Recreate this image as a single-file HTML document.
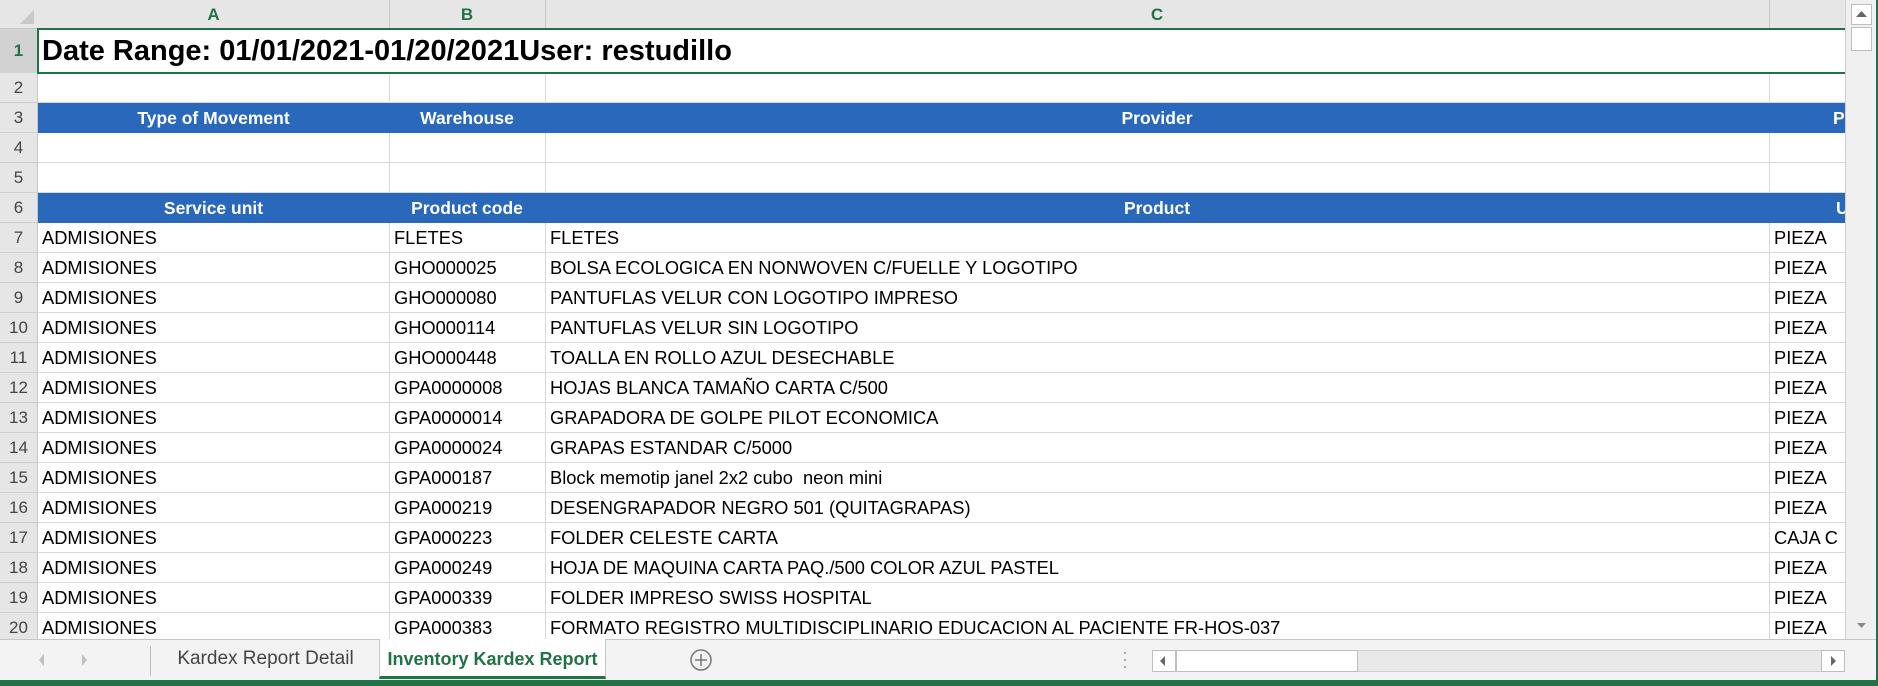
<!DOCTYPE html>
<html><head><meta charset="utf-8"><style>
*{margin:0;padding:0;box-sizing:border-box}
html,body{width:1878px;height:686px;overflow:hidden}
body{background:#fff;font-family:"Liberation Sans",sans-serif;position:relative}
.abs{position:absolute}
.hl{position:absolute;height:1px;background:#d9d9d9}
.vl{position:absolute;width:1px;background:#d9d9d9}
.t{position:absolute;font-size:18.3px;color:#000;white-space:nowrap;line-height:30px}
.rn{position:absolute;left:0;width:37px;text-align:center;font-size:17px;color:#444;line-height:30px}
.blue{position:absolute;left:38px;width:1807px;height:30px;background:#2a68bb}
.bh{position:absolute;color:#fff;font-weight:bold;font-size:17.5px;line-height:30px;text-align:center;white-space:nowrap}
</style></head><body>
<div class="abs" style="left:0;top:0;width:1845px;height:29px;background:#e6e6e6;border-bottom:1px solid #c6c6c6"></div>
<svg class="abs" style="left:20px;top:10px" width="14" height="14"><polygon points="14,0 14,14 0,14" fill="#c8c8c8"/></svg>
<div class="abs" style="left:38px;top:0;width:351px;text-align:center;line-height:29px;color:#217346;font-size:17px;font-weight:bold">A</div>
<div class="abs" style="left:389px;top:0;width:156px;text-align:center;line-height:29px;color:#217346;font-size:17px;font-weight:bold">B</div>
<div class="abs" style="left:545px;top:0;width:1224px;text-align:center;line-height:29px;color:#217346;font-size:17px;font-weight:bold">C</div>
<div class="abs" style="left:389px;top:0;width:1px;height:29px;background:#c6c6c6"></div>
<div class="abs" style="left:545px;top:0;width:1px;height:29px;background:#c6c6c6"></div>
<div class="abs" style="left:1769px;top:0;width:1px;height:29px;background:#c6c6c6"></div>
<div class="abs" style="left:0;top:29px;width:38px;height:610px;background:#e6e6e6;border-right:1px solid #c6c6c6"></div>
<div class="abs" style="left:0;top:29px;width:38px;height:44px;background:#d2d2d2"></div>
<div class="rn" style="top:29px;line-height:44px;color:#217346;font-weight:bold">1</div>
<div class="vl" style="left:389px;top:73px;height:566px"></div>
<div class="vl" style="left:545px;top:73px;height:566px"></div>
<div class="vl" style="left:1769px;top:73px;height:566px"></div>
<div id="g"></div>
<div class="abs" style="left:37px;top:28px;width:1810px;height:46px;border:2px solid #217346;background:#fff"></div>
<div class="abs" style="left:42px;top:29px;line-height:44px;font-size:29px;font-weight:bold;white-space:nowrap">Date Range: 01/01/2021-01/20/2021User: restudillo</div>
<div class="blue" style="top:103px"></div>
<div class="bh" style="left:38px;top:103px;width:351px">Type of Movement</div>
<div class="bh" style="left:389px;top:103px;width:156px">Warehouse</div>
<div class="bh" style="left:545px;top:103px;width:1224px">Provider</div>
<div class="bh" style="left:1833px;top:103px;width:12px;overflow:hidden;text-align:left">P</div>
<div class="blue" style="top:193px"></div>
<div class="bh" style="left:38px;top:193px;width:351px">Service unit</div>
<div class="bh" style="left:389px;top:193px;width:156px">Product code</div>
<div class="bh" style="left:545px;top:193px;width:1224px">Product</div>
<div class="bh" style="left:1836px;top:193px;width:9px;overflow:hidden;text-align:left">U</div>
<div id="rows"></div>
<div class="abs" style="left:1845px;top:0;width:31px;height:639px;background:#f0f0f0;border-left:1px solid #d0d0d0"></div>
<div class="abs" style="left:1851px;top:4px;width:21px;height:21px;background:#fff;border:1px solid #bdbdbd"></div>
<svg class="abs" style="left:1855px;top:10px" width="13" height="8"><polygon points="1,7 6.5,1 12,7" fill="#666"/></svg>
<div class="abs" style="left:1851px;top:27px;width:21px;height:24px;background:#fff;border:1px solid #bdbdbd"></div>
<svg class="abs" style="left:1856px;top:622px" width="11" height="8"><polygon points="1,1 5.5,6 10,1" fill="#888"/></svg>
<div class="abs" style="left:1876px;top:0;width:2px;height:686px;background:#217346"></div>
<div class="abs" style="left:0;top:639px;width:1876px;height:41px;background:#f3f3f3;border-top:1px solid #c6c6c6"></div>
<svg class="abs" style="left:38px;top:653px" width="50" height="14"><polygon points="6,1 1,7 6,13" fill="#c0c0c0"/><polygon points="44,1 49,7 44,13" fill="#c0c0c0"/></svg>
<div class="abs" style="left:150px;top:646px;width:1px;height:30px;background:#bdbdbd"></div>
<div class="abs" style="left:158px;top:639px;width:215px;line-height:40px;text-align:center;font-size:19px;color:#444;white-space:nowrap">Kardex Report Detail</div>
<div class="abs" style="left:379px;top:639px;width:227px;height:40px;background:#fff;border-left:1px solid #c6c6c6;border-right:1px solid #c6c6c6;border-bottom:3px solid #217346"></div>
<div class="abs" style="left:379px;top:639px;width:227px;line-height:40px;text-align:center;font-size:18px;font-weight:bold;color:#217346;white-space:nowrap">Inventory Kardex Report</div>
<svg class="abs" style="left:689px;top:648px" width="24" height="24"><circle cx="12" cy="12" r="10" fill="none" stroke="#777" stroke-width="1.5"/><path d="M12 6v12M6 12h12" stroke="#777" stroke-width="1.5"/></svg>
<svg class="abs" style="left:1123px;top:650px" width="4" height="20"><circle cx="2" cy="3" r="1.2" fill="#aaa"/><circle cx="2" cy="10" r="1.2" fill="#aaa"/><circle cx="2" cy="17" r="1.2" fill="#aaa"/></svg>
<div class="abs" style="left:1152px;top:650px;width:693px;height:22px;background:#e9e9e9;border:1px solid #cfcfcf"></div>
<div class="abs" style="left:1152px;top:650px;width:24px;height:22px;background:#fff;border:1px solid #bdbdbd"></div>
<svg class="abs" style="left:1159px;top:655px" width="8" height="12"><polygon points="6,1 1,6 6,11" fill="#666"/></svg>
<div class="abs" style="left:1176px;top:650px;width:182px;height:22px;background:#fff;border:1px solid #bdbdbd"></div>
<div class="abs" style="left:1821px;top:650px;width:24px;height:22px;background:#fff;border:1px solid #bdbdbd"></div>
<svg class="abs" style="left:1830px;top:655px" width="8" height="12"><polygon points="1,1 6,6 1,11" fill="#666"/></svg>
<div class="abs" style="left:0;top:680px;width:1878px;height:6px;background:#217346"></div>
<script>
var g='',tops=[73,103,133,163,193];
for(var i=0;i<14;i++){tops.push(223+i*30);}
for(var i=0;i<tops.length-1;i++){g+='<div class="hl" style="left:38px;top:'+(tops[i]+29)+'px;width:1807px"></div>';
g+='<div class="abs" style="left:0;top:'+(tops[i]+29)+'px;width:38px;height:1px;background:#cfcfcf"></div>';}
var nums=[2,3,4,5,6];for(var i=0;i<5;i++)g+='<div class="rn" style="top:'+tops[i]+'px">'+nums[i]+'</div>';
document.getElementById('g').innerHTML=g;
var d=[["FLETES","FLETES","PIEZA"],["GHO000025","BOLSA ECOLOGICA EN NONWOVEN C/FUELLE Y LOGOTIPO","PIEZA"],["GHO000080","PANTUFLAS VELUR CON LOGOTIPO IMPRESO","PIEZA"],["GHO000114","PANTUFLAS VELUR SIN LOGOTIPO","PIEZA"],["GHO000448","TOALLA EN ROLLO AZUL DESECHABLE","PIEZA"],["GPA0000008","HOJAS BLANCA TAMAÑO CARTA C/500","PIEZA"],["GPA0000014","GRAPADORA DE GOLPE PILOT ECONOMICA","PIEZA"],["GPA0000024","GRAPAS ESTANDAR C/5000","PIEZA"],["GPA000187","Block memotip janel 2x2 cubo &nbsp;neon mini","PIEZA"],["GPA000219","DESENGRAPADOR NEGRO 501 (QUITAGRAPAS)","PIEZA"],["GPA000223","FOLDER CELESTE CARTA","CAJA C"],["GPA000249","HOJA DE MAQUINA CARTA PAQ./500 COLOR AZUL PASTEL","PIEZA"],["GPA000339","FOLDER IMPRESO SWISS HOSPITAL","PIEZA"],["GPA000383","FORMATO REGISTRO MULTIDISCIPLINARIO EDUCACION AL PACIENTE FR-HOS-037","PIEZA"]];
var h='';
for(var i=0;i<d.length;i++){var y=223+i*30;
h+='<div class="rn" style="top:'+y+'px">'+(i+7)+'</div>';
h+='<div class="t" style="left:42px;top:'+y+'px">ADMISIONES</div>';
h+='<div class="t" style="left:394px;top:'+y+'px">'+d[i][0]+'</div>';
h+='<div class="t" style="left:550px;top:'+y+'px">'+d[i][1]+'</div>';
h+='<div class="t" style="left:1774px;top:'+y+'px;width:70px;overflow:hidden">'+d[i][2]+'</div>';}
document.getElementById('rows').innerHTML=h;
</script>
</body></html>
